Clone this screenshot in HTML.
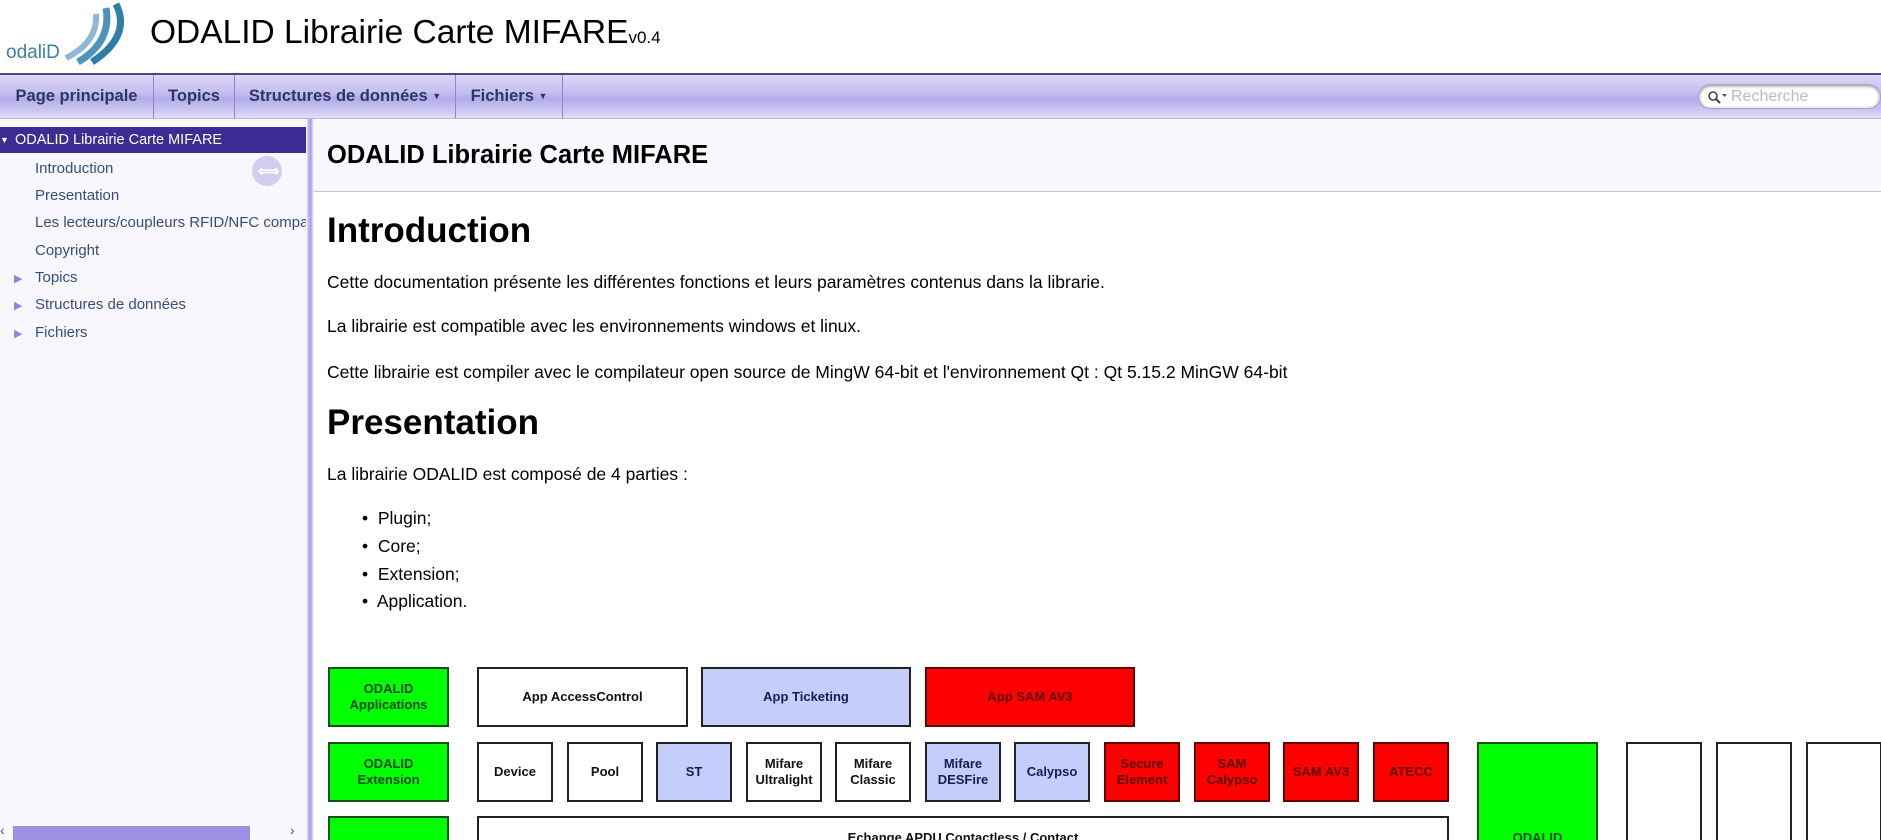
<!DOCTYPE html>
<html><head><meta charset="utf-8">
<style>
*{margin:0;padding:0;box-sizing:border-box}
html,body{width:1881px;height:840px;overflow:hidden}
body{background:#fff;font-family:"Liberation Sans",Arial,sans-serif;position:relative}
.abs{position:absolute}
#hdr{left:0;top:0;width:1881px;height:75px;background:#fff;border-bottom:2px solid #4a4585}
#title{left:150px;top:14px;font-size:33.5px;color:#000;white-space:nowrap}
#title small{font-size:17px}
#nav{left:0;top:75px;width:1881px;height:44px;background:linear-gradient(#dcd8f6 0%,#c6bff1 40%,#b3aaea 55%,#cfc9f3 85%,#e2dff8 100%);border-bottom:1px solid #b9b2e0}
.ni{position:absolute;top:0;height:43px;line-height:43px;font-weight:bold;font-size:16.5px;color:#283a5d;border-right:1px solid #8f86cf;text-align:center}
.ni .c{font-size:9px;vertical-align:2px}
#search{left:1698px;top:84px;width:183px;height:25px;border-radius:13px;background:#fff;border:1px solid #a9a3cd;box-shadow:inset 0 1px 3px #888}
#search span{position:absolute;left:32px;top:3px;font-size:16px;color:#bbb}
#side{left:0;top:119px;width:306px;height:721px;background:#f8f7fd;overflow:hidden}
#split{left:306px;top:119px;width:8px;height:721px;background:linear-gradient(90deg,#fff,#c0b8ec 30%,#a89ee6 60%,#fff)}
.si{position:absolute;left:35px;font-size:15px;color:#364d7c;white-space:nowrap}
.ar{position:absolute;left:14px;font-size:11px;color:#8e86d6}
#sel{left:0;top:127px;width:306px;height:26px;background:#3c2c93;color:#fff;font-size:14.5px;line-height:26px;padding-left:15px;white-space:nowrap}
#hd{left:314px;top:120px;width:1567px;height:72px;background:#f9f8fd;border-bottom:1px solid #c7c2e2}
#hd div{position:absolute;left:13px;top:21px;font-size:25.5px;font-weight:bold}
.h1{position:absolute;left:327px;font-size:35px;font-weight:bold}
.p{position:absolute;left:327px;font-size:17.5px;white-space:nowrap}
.b{position:absolute;left:362px;font-size:17.5px}
.bx{position:absolute;border:2px solid #222;display:flex;align-items:center;justify-content:center;text-align:center;font-weight:bold;font-size:13px;line-height:16px;color:#111}
.g{background:#00ff00;border-color:#175017;color:#134913}
.w{background:#fff}
.bl{background:#c5cdfb;color:#1a1a55}
.r{background:#ff0000;border-color:#600;color:#5c0000}
</style></head><body>
<div id="hdr" class="abs">
<svg class="abs" style="left:0;top:0" width="140" height="72">
<path d="M66 58 Q98 42 96 14" stroke="#8fb8d6" stroke-width="6" fill="none"/>
<path d="M78 62 Q112 42 106 8" stroke="#4d93bd" stroke-width="7" fill="none"/>
<path d="M92 62 Q132 36 116 4" stroke="#2f7ea8" stroke-width="7" fill="none"/>
<text x="6" y="58" font-family="Liberation Sans" font-size="19" fill="#3d7fa8">odaliD</text>
</svg>
<div id="title" class="abs">ODALID Librairie Carte MIFARE<small>v0.4</small></div>
</div>
<div id="nav" class="abs">
<div class="ni" style="left:0;width:154px">Page principale</div>
<div class="ni" style="left:154px;width:81px">Topics</div>
<div class="ni" style="left:235px;width:221px">Structures de données <span class="c">▼</span></div>
<div class="ni" style="left:456px;width:107px">Fichiers <span class="c">▼</span></div>
</div>
<div id="search" class="abs"><svg class="abs" style="left:8px;top:5px" width="22" height="14"><circle cx="6" cy="6" r="4" stroke="#444" stroke-width="1.6" fill="none"/><path d="M9 9 L13 13" stroke="#444" stroke-width="2"/><path d="M15 4 L20 4 L17.5 7Z" fill="#555"/></svg><span>Recherche</span></div>
<div id="side" class="abs">
<div class="si" style="top:41px">Introduction</div>
<div class="si" style="top:68px">Presentation</div>
<div class="si" style="top:95px">Les lecteurs/coupleurs RFID/NFC compatibles</div>
<div class="si" style="top:123px">Copyright</div>
<span class="ar" style="top:153px">▶</span><div class="si" style="top:150px">Topics</div>
<span class="ar" style="top:180px">▶</span><div class="si" style="top:177px">Structures de données</div>
<span class="ar" style="top:208px">▶</span><div class="si" style="top:205px">Fichiers</div>
<div class="abs" style="left:252px;top:37px;width:30px;height:30px;border-radius:50%;background:#d2cdf2"></div>
<div class="abs" style="left:258px;top:43px;color:#fff;font-size:15px;font-weight:bold">⟺</div>
<div class="abs" style="left:13px;top:707px;width:237px;height:14px;background:#9d8fe4"></div>
<div class="abs" style="left:0;top:703px;font-size:14px;color:#555">‹</div>
<div class="abs" style="left:290px;top:703px;font-size:14px;color:#555">›</div>
</div>
<div id="sel" class="abs"><span style="position:absolute;left:0;font-size:9px">▼</span>ODALID Librairie Carte MIFARE</div>
<div id="split" class="abs"></div>
<div id="hd" class="abs"><div>ODALID Librairie Carte MIFARE</div></div>
<div class="h1" style="top:211px">Introduction</div>
<div class="p" style="top:272px">Cette documentation présente les différentes fonctions et leurs paramètres contenus dans la librarie.</div>
<div class="p" style="top:316px">La librairie est compatible avec les environnements windows et linux.</div>
<div class="p" style="top:362px">Cette librairie est compiler avec le compilateur open source de MingW 64-bit et l'environnement Qt : Qt 5.15.2 MinGW 64-bit</div>
<div class="h1" style="top:403px">Presentation</div>
<div class="p" style="top:464px">La librairie ODALID est composé de 4 parties :</div>
<div class="b" style="top:508px">•&nbsp; Plugin;</div>
<div class="b" style="top:536px">•&nbsp; Core;</div>
<div class="b" style="top:564px">•&nbsp; Extension;</div>
<div class="b" style="top:591px">•&nbsp; Application.</div>

<div class="bx g" style="left:328px;top:667px;width:121px;height:60px">ODALID<br>Applications</div>
<div class="bx w" style="left:477px;top:667px;width:211px;height:60px">App AccessControl</div>
<div class="bx bl" style="left:701px;top:667px;width:210px;height:60px">App Ticketing</div>
<div class="bx r" style="left:925px;top:667px;width:210px;height:60px">App SAM AV3</div>

<div class="bx g" style="left:328px;top:742px;width:121px;height:60px">ODALID<br>Extension</div>
<div class="bx w" style="left:477px;top:742px;width:76px;height:60px">Device</div>
<div class="bx w" style="left:567px;top:742px;width:76px;height:60px">Pool</div>
<div class="bx bl" style="left:656px;top:742px;width:76px;height:60px">ST</div>
<div class="bx w" style="left:746px;top:742px;width:76px;height:60px">Mifare<br>Ultralight</div>
<div class="bx w" style="left:835px;top:742px;width:76px;height:60px">Mifare<br>Classic</div>
<div class="bx bl" style="left:925px;top:742px;width:76px;height:60px">Mifare<br>DESFire</div>
<div class="bx bl" style="left:1014px;top:742px;width:76px;height:60px">Calypso</div>
<div class="bx r" style="left:1104px;top:742px;width:76px;height:60px">Secure<br>Element</div>
<div class="bx r" style="left:1194px;top:742px;width:76px;height:60px">SAM<br>Calypso</div>
<div class="bx r" style="left:1283px;top:742px;width:76px;height:60px">SAM AV3</div>
<div class="bx r" style="left:1373px;top:742px;width:76px;height:60px">ATECC</div>
<div class="bx g" style="left:1477px;top:742px;width:121px;height:120px;align-items:flex-start;padding-top:86px">ODALID</div>
<div class="bx w" style="left:1626px;top:742px;width:76px;height:120px"></div>
<div class="bx w" style="left:1716px;top:742px;width:76px;height:120px"></div>
<div class="bx w" style="left:1806px;top:742px;width:76px;height:120px"></div>

<div class="bx g" style="left:328px;top:816px;width:121px;height:60px"></div>
<div class="bx w" style="left:477px;top:816px;width:972px;height:60px;align-items:flex-start;padding-top:12px">Echange APDU Contactless / Contact</div>
</body></html>
